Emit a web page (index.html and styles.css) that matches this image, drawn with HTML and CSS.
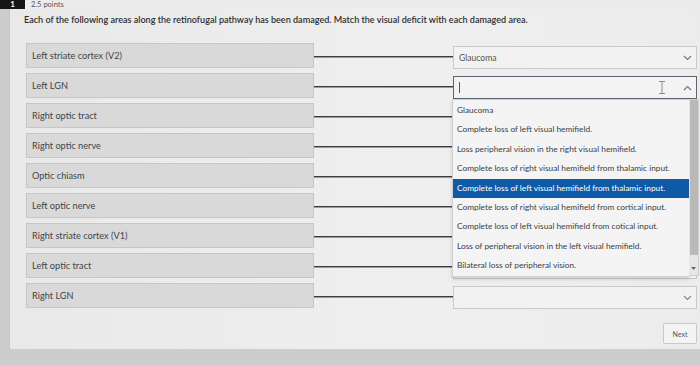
FILE: index.html
```html
<!DOCTYPE html>
<html lang="en">
<head>
    <meta charset="UTF-8">
    <link rel="stylesheet" href="styles.css">
</head>
<body>
    <div class="head">
        <span class="num">1</span>
        <span class="points">2.5 points</span>
    </div>
    <div class="panel">
        <p class="question">Each of the following areas along the retinofugal pathway has been damaged. Match the visual deficit with each damaged area.</p>

        <div class="match">
            <div class="row">
                <div class="term">Left striate cortex (V2)</div>
                <div class="line"></div>
                <div class="select">
                    <span class="value">Glaucoma</span>
                    <svg class="chev" width="9" height="6" viewBox="0 0 9 6"><polyline points="1,1 4.5,4.5 8,1" fill="none" stroke="#777" stroke-width="1.2"/></svg>
                </div>
            </div>
            <div class="row">
                <div class="term">Left LGN</div>
                <div class="line"></div>
                <div class="select open">
                    <span class="caret"></span>
                    <svg class="ibeam" width="8" height="13" viewBox="0 0 8 13"><path d="M1 0.5h6M4 0.5v12M1 12.5h6" fill="none" stroke="#8a8a8a" stroke-width="1"/></svg>
                    <svg class="chev" width="9" height="6" viewBox="0 0 9 6"><polyline points="1,5 4.5,1.5 8,5" fill="none" stroke="#777" stroke-width="1.2"/></svg>

                    <ul class="options">
                        <li>Glaucoma</li>
                        <li>Complete loss of left visual hemifield.</li>
                        <li>Loss peripheral vision in the right visual hemifield.</li>
                        <li>Complete loss of right visual hemifield from thalamic input.</li>
                        <li class="active">Complete loss of left visual hemifield from thalamic input.</li>
                        <li>Complete loss of right visual hemifield from cortical input.</li>
                        <li>Complete loss of left visual hemifield from cotical input.</li>
                        <li>Loss of peripheral vision in the left visual hemifield.</li>
                        <li>Bilateral loss of peripheral vision.</li>
                    </ul>
                    <div class="scroll">
                        <div class="thumb"></div>
                        <svg class="down" width="5" height="3" viewBox="0 0 5 3"><polygon points="0,0 5,0 2.5,3" fill="#666"/></svg>
                    </div>
                </div>
            </div>
            <div class="row">
                <div class="term">Right optic tract</div>
                <div class="line"></div>
                <div class="select"></div>
            </div>
            <div class="row">
                <div class="term">Right optic nerve</div>
                <div class="line"></div>
                <div class="select"></div>
            </div>
            <div class="row">
                <div class="term">Optic chiasm</div>
                <div class="line"></div>
                <div class="select"></div>
            </div>
            <div class="row">
                <div class="term">Left optic nerve</div>
                <div class="line"></div>
                <div class="select"></div>
            </div>
            <div class="row">
                <div class="term">Right striate cortex (V1)</div>
                <div class="line"></div>
                <div class="select"></div>
            </div>
            <div class="row">
                <div class="term">Left optic tract</div>
                <div class="line"></div>
                <div class="select"></div>
            </div>
            <div class="row">
                <div class="term">Right LGN</div>
                <div class="line"></div>
                <div class="select">
                    <span class="value"></span>
                    <svg class="chev" width="9" height="6" viewBox="0 0 9 6"><polyline points="1,1 4.5,4.5 8,1" fill="none" stroke="#888" stroke-width="1.2"/></svg>
                </div>
            </div>
        </div>

        <div class="foot">
            <button class="next">Next</button>
        </div>
    </div>
</body>
</html>
```

FILE: styles.css
```css
body {
    margin: 0;
    padding: 0;
    width: 700px;
    height: 365px;
    overflow: hidden;
    background: #cdcdcd;
    font-family: Lato, "Open Sans", sans-serif;
    color: #3a3a3a;
}

.head {
    display: flex;
    align-items: center;
    height: 9px;
    background: #ececec;
}

.num {
    width: 25px;
    height: 9px;
    background: #151515;
    color: #fff;
    font-size: 8px;
    font-weight: bold;
    line-height: 9px;
    text-align: center;
}

.points {
    margin-left: 6px;
    font-size: 7.5px;
    color: #555;
    line-height: 9px;
}

.panel {
    margin-left: 10px;
    height: 340px;
    background: linear-gradient(90deg, #e9e9e9 0%, #efefef 60%, #ececec 100%);
    box-shadow: -1px 0 0 #c4c4c4;
    display: flex;
    flex-direction: column;
}

.question {
    margin: 0;
    padding: 5px 0 0 14px;
    font-size: 9.05px;
    line-height: 11px;
    font-weight: 600;
    color: #2f2f2f;
}

.match {
    margin-top: 18px;
    padding-left: 16px;
    display: flex;
    flex-direction: column;
    gap: 6px;
}

.row {
    display: flex;
    align-items: flex-start;
    height: 24px;
}

.term {
    width: 281px;
    height: 23px;
    padding-left: 5px;
    background: #d9d9d9;
    border: 1px solid #c6c6c6;
    font-size: 9.2px;
    line-height: 23px;
    color: #444;
}

.line {
    flex: 1;
    height: 1px;
    margin-top: 13px;
    background: #3e3e3e;
    box-shadow: 0 1px 0 #9a9a9a;
}

.select {
    position: relative;
    width: 242px;
    height: 21px;
    margin: 3px 3px 0 0;
    background: #f2f2f2;
    border: 1px solid #c9c9c9;
    display: flex;
    align-items: center;
    font-size: 8.6px;
    color: #555;
}

.select .value {
    flex: 1;
    padding-left: 5px;
}

.select .chev {
    margin-right: 4px;
}

.select.open {
    border-color: #5b6570;
    background: #f3f3f3;
    z-index: 2;
}

.caret {
    width: 1px;
    height: 11px;
    margin-left: 5px;
    background: #555;
}

.ibeam {
    margin-left: auto;
    margin-right: 17px;
}

.options {
    position: absolute;
    left: -2px;
    top: 22px;
    width: 236px;
    margin: 0;
    padding: 1px 0 0;
    list-style: none;
    background: #f4f4f4;
    border: 1px solid #cfcfcf;
    border-right: none;
    box-shadow: 0 2px 4px rgba(0, 0, 0, 0.15);
}

.options li {
    height: 19.4px;
    padding-left: 4px;
    font-size: 8.3px;
    line-height: 19.4px;
    color: #404040;
    white-space: nowrap;
}

.options li.active {
    background: #0f5aa6;
    color: #fff;
}

.scroll {
    position: absolute;
    left: 235px;
    top: 22px;
    width: 9px;
    height: 175px;
    background: #e6e6e6;
    border: 1px solid #cfcfcf;
    border-left: none;
    display: flex;
    flex-direction: column;
    align-items: center;
}

.thumb {
    width: 8px;
    height: 155px;
    background: #b9b9b9;
}

.down {
    margin-top: auto;
    margin-bottom: 5px;
}

.foot {
    display: flex;
    justify-content: flex-end;
    margin-top: 16px;
    padding-right: 3px;
}

.next {
    width: 34px;
    height: 21px;
    padding: 0;
    background: #f4f4f4;
    border: 1px solid #cacaca;
    border-radius: 2px;
    font-family: Lato, sans-serif;
    font-size: 7px;
    color: #555;
}
```
